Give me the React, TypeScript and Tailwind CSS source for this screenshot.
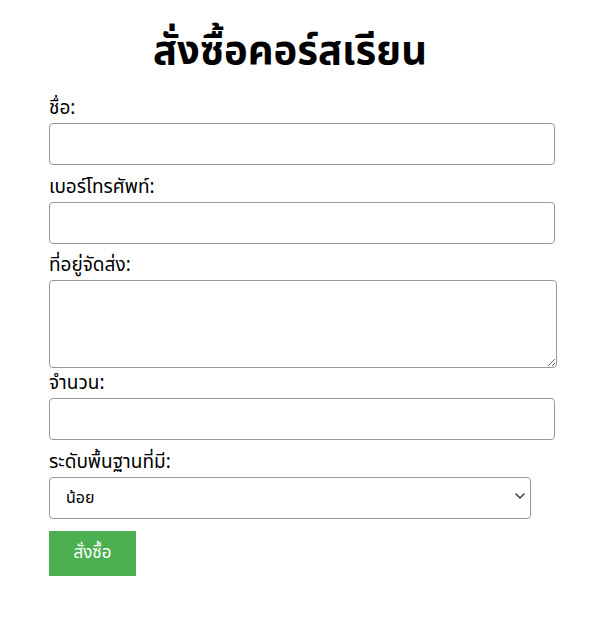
export default function App() {
  const font = { fontFamily: '"Noto Sans Thai", Tahoma, "Noto Sans", "DejaVu Sans", sans-serif' }
  const field = 'mt-[3px] h-[42px] rounded-[4px] border border-[#999] px-[12px] text-[16px]'
  return (
    <div className="min-h-[623px] bg-white text-black" style={font}>
      <div className="ml-[49px] w-[482px] pt-[20px]">
        <h1 className="text-center text-[40px] font-bold leading-[64px]">สั่งซื้อคอร์สเรียน</h1>

        <form className="mt-[14px] flex flex-col" onSubmit={e => e.preventDefault()}>
          <label className="block text-[19px] leading-[22px]">ชื่อ:</label>
          <input type="text" className={`${field} mb-[12px] w-[506px]`} />

          <label className="block text-[19px] leading-[22px]">เบอร์โทรศัพท์:</label>
          <input type="text" className={`${field} mb-[11px] w-[506px]`} />

          <label className="block text-[19px] leading-[22px]">ที่อยู่จัดส่ง:</label>
          <textarea className="mt-[3px] mb-[5px] h-[88px] w-[508px] rounded-[4px] border border-[#999] px-[12px]" />

          <label className="block text-[19px] leading-[22px]">จำนวน:</label>
          <input type="number" className={`${field} mb-[12px] w-[506px]`} />

          <label className="block text-[19px] leading-[22px]">ระดับพื้นฐานที่มี:</label>
          <div className="relative w-[482px]">
            <select className={`${field} w-full appearance-none pl-[16px]`}>
              <option>น้อย</option>
              <option>ปานกลาง</option>
              <option>มาก</option>
            </select>
            {/* chevron */}
            <svg
              className="pointer-events-none absolute right-[5px] top-[18px]"
              width="12" height="8" viewBox="0 0 12 8" fill="none"
            >
              <path d="M1.5 1.5 L6 6 L10.5 1.5" stroke="#333" strokeWidth="1.4" />
            </svg>
          </div>

          <div className="mt-[12px]">
            <button type="submit" className="h-[45px] w-[87px] bg-[#4caf50] text-[17px] text-white">
              สั่งซื้อ
            </button>
          </div>
        </form>
      </div>
    </div>
  )
}
